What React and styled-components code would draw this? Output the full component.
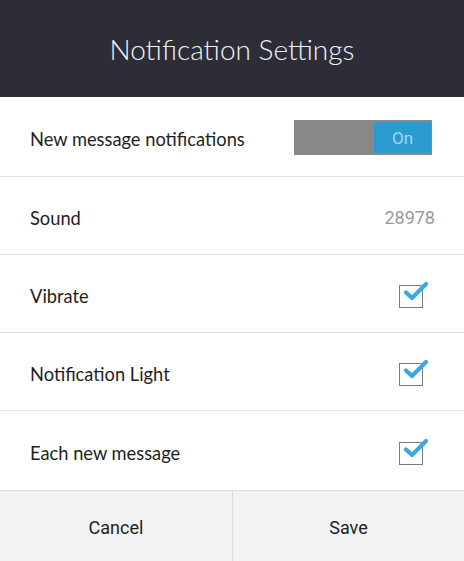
import React from "react";
import styled, { createGlobalStyle } from "styled-components";

const Global = createGlobalStyle`
  html, body { margin: 0; padding: 0; background: #fff; }
  #root { width: 464px; height: 561px; }
`;

const Dialog = styled.div`
  width: 464px;
  height: 561px;
  display: flex;
  flex-direction: column;
  background: #fff;
  overflow: hidden;
`;

const Header = styled.div`
  height: 97px;
  background: #2d2d37;
  display: flex;
  align-items: center;
  justify-content: center;
  color: #f4f4f4;
  font-family: Lato, sans-serif;
  font-weight: 300;
  font-size: 28px;
  padding-top: 1px;
  box-sizing: border-box;
`;

const List = styled.div`
  flex: 1;
  display: flex;
  flex-direction: column;
`;

const Row = styled.div`
  height: ${(p) => p.$h}px;
  box-sizing: border-box;
  border-bottom: ${(p) => (p.$last ? "none" : "1.5px solid #e2e2e2")};
  display: flex;
  align-items: center;
  justify-content: space-between;
  padding: 0 29px 0 30px;
`;

const Label = styled.span`
  font-family: Lato, sans-serif;
  font-size: 18.3px;
  color: #1e1e1e;
  padding-top: 4px;
`;

const Value = styled.span`
  font-family: Roboto, sans-serif;
  font-size: 18px;
  color: #9a9a9a;
  padding-top: 4px;
`;

const Toggle = styled.div`
  width: 138px;
  height: 35px;
  background: #888888;
  display: flex;
  justify-content: flex-end;
  align-items: center;
  padding: 2px 1px 2px 0;
  box-sizing: border-box;
  margin-right: 3px;
  margin-top: 2px;
`;

const Knob = styled.div`
  width: 57px;
  height: 31px;
  background: #2a9bcc;
  border-radius: 2px;
  display: flex;
  align-items: center;
  justify-content: center;
  font-family: Roboto, sans-serif;
  font-size: 17px;
  color: #a8d8ee;
`;

const CheckWrap = styled.div`
  width: 30px;
  height: 28px;
  position: relative;
  margin-right: 6px;
  margin-top: 1px;
`;

const Box = styled.div`
  position: absolute;
  left: 0;
  bottom: 0;
  width: 24px;
  height: 23px;
  border: 1.5px solid #7a7a7a;
  box-sizing: border-box;
`;

const Mark = styled.svg`
  position: absolute;
  left: 2px;
  top: 0;
`;

const Check = () => (
  <CheckWrap>
    <Box />
    <Mark width="28" height="24" viewBox="0 0 28 24">
      <path
        d="M5 12.5 L11 18 L25 4"
        fill="none"
        stroke="#3aa8e2"
        strokeWidth="4.2"
        strokeLinecap="round"
        strokeLinejoin="round"
      />
    </Mark>
  </CheckWrap>
);

const Footer = styled.div`
  height: 71px;
  background: #f3f3f3;
  border-top: 1.5px solid #dcdcdc;
  box-sizing: border-box;
  display: grid;
  grid-template-columns: 232px 1fr;
`;

const FooterButton = styled.button`
  border: none;
  background: transparent;
  border-left: ${(p) => (p.$divider ? "1px solid #dcdcdc" : "none")};
  font-family: Roboto, sans-serif;
  font-size: 18px;
  color: #1e1e1e;
  padding: 2px 0 0;
  cursor: pointer;
`;

export default function App() {
  return (
    <>
      <Global />
      <Dialog>
        <Header>Notification Settings</Header>
        <List>
          <Row $h={80}>
            <Label>New message notifications</Label>
            <Toggle>
              <Knob>On</Knob>
            </Toggle>
          </Row>
          <Row $h={78}>
            <Label>Sound</Label>
            <Value>28978</Value>
          </Row>
          <Row $h={78}>
            <Label>Vibrate</Label>
            <Check />
          </Row>
          <Row $h={78}>
            <Label>Notification Light</Label>
            <Check />
          </Row>
          <Row $h={79} $last>
            <Label>Each new message</Label>
            <Check />
          </Row>
        </List>
        <Footer>
          <FooterButton>Cancel</FooterButton>
          <FooterButton $divider>Save</FooterButton>
        </Footer>
      </Dialog>
    </>
  );
}
